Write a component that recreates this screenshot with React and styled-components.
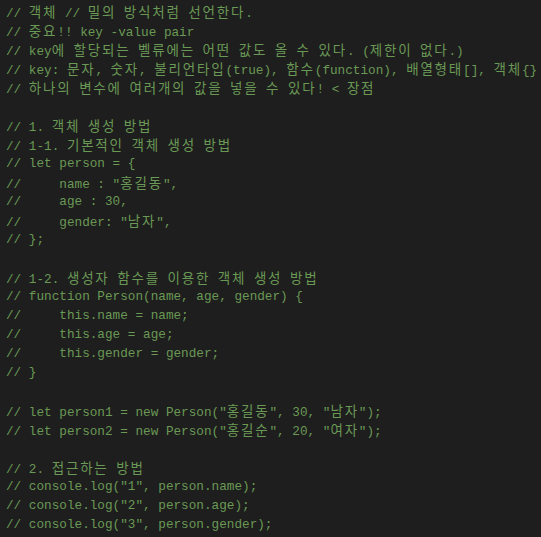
import styled, { createGlobalStyle } from "styled-components";

const GlobalStyle = createGlobalStyle`
  html, body {
    margin: 0;
    padding: 0;
    background: #1e1e1e;
  }
`;

const Editor = styled.div`
  width: 541px;
  height: 537px;
  overflow: hidden;
  background: #1e1e1e;
  padding: 2px 0 0 6px;
  box-sizing: border-box;
  font-family: "Liberation Mono", "Noto Sans CJK KR", monospace;
  font-size: 12.7px;
  color: #6a9955;
`;

const Line = styled.div`
  height: 19px;
  line-height: 19px;
  white-space: pre;
`;

// hangul falls back to a proportional font, so widen it to the editor's cell
const Hangul = styled.span`
  font-family: "Noto Sans CJK KR", sans-serif;
  font-size: 13.5px;
  letter-spacing: 1.8px;
`;

const lines = [
  "// 객체 // 밀의 방식처럼 선언한다.",
  "// 중요!! key -value pair",
  "// key에 할당되는 벨류에는 어떤 값도 올 수 있다. (제한이 없다.)",
  "// key: 문자, 숫자, 불리언타입(true), 함수(function), 배열형태[], 객체{}",
  "// 하나의 변수에 여러개의 값을 넣을 수 있다! < 장점",
  "",
  "// 1. 객체 생성 방법",
  "// 1-1. 기본적인 객체 생성 방법",
  "// let person = {",
  '//     name : "홍길동",',
  "//     age : 30,",
  '//     gender: "남자",',
  "// };",
  "",
  "// 1-2. 생성자 함수를 이용한 객체 생성 방법",
  "// function Person(name, age, gender) {",
  "//     this.name = name;",
  "//     this.age = age;",
  "//     this.gender = gender;",
  "// }",
  "",
  '// let person1 = new Person("홍길동", 30, "남자");',
  '// let person2 = new Person("홍길순", 20, "여자");',
  "",
  "// 2. 접근하는 방법",
  '// console.log("1", person.name);',
  '// console.log("2", person.age);',
  '// console.log("3", person.gender);',
];

const splitHangul = (text) =>
  text.split(/([\uAC00-\uD7A3]+)/).map((part, i) =>
    /[\uAC00-\uD7A3]/.test(part) ? <Hangul key={i}>{part}</Hangul> : part
  );

const App = () => {
  return (
    <>
      <GlobalStyle />
      <Editor>
        {lines.map((text, i) => (
          <Line key={i}>{text ? splitHangul(text) : " "}</Line>
        ))}
      </Editor>
    </>
  );
};

export default App;
